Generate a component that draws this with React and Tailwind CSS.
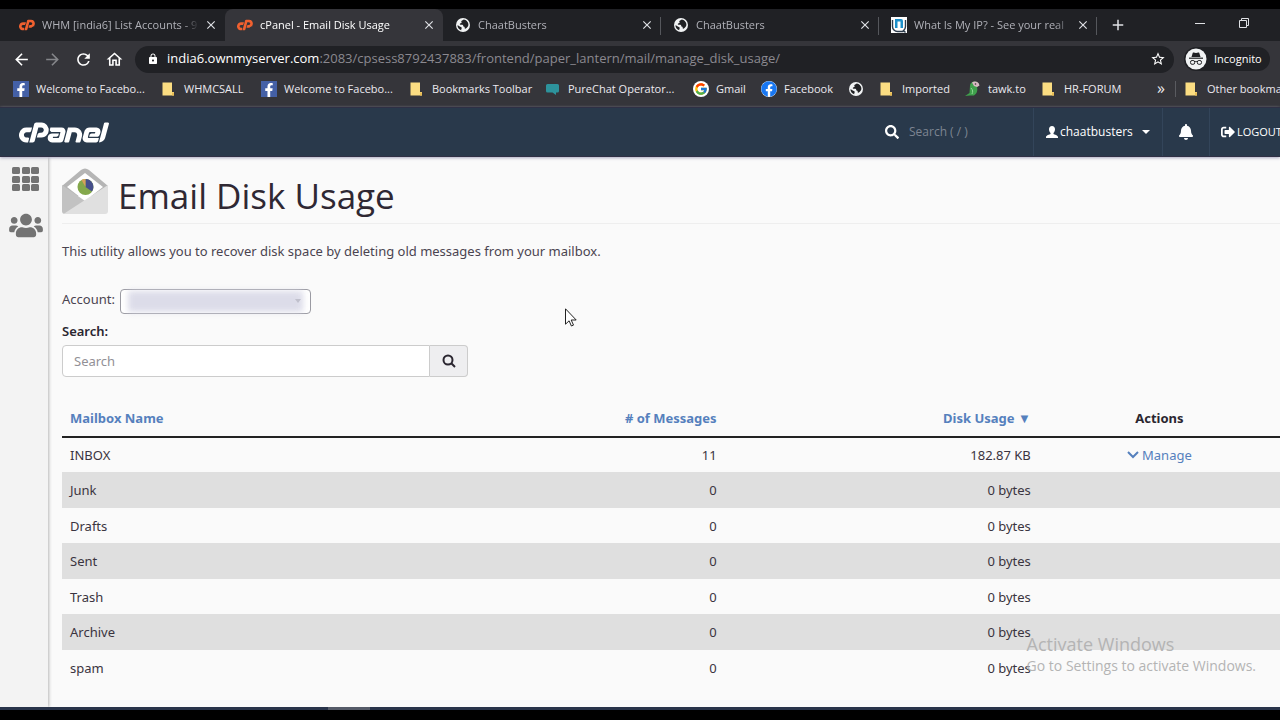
import { FaBell, FaSearch, FaSignOutAlt, FaUsers, FaFacebookF, FaFacebook } from 'react-icons/fa';
import { FcGoogle } from 'react-icons/fc';
import { MdArrowBack, MdArrowForward, MdRefresh, MdOutlineHome, MdLock, MdStarBorder, MdClose, MdAdd } from 'react-icons/md';
import { SiCpanel } from 'react-icons/si';

const GlobeIcon = () => (
  <svg viewBox="0 0 16 16" className="h-4 w-4 shrink-0">
    <circle cx="8" cy="8" r="7" fill="#f1f3f4" />
    <path d="M8.6 2.4c-.4 1-1.800.7-2.300 1.700-.3.7.5 1 .3 1.600-.3.7-1.600.4-1.800 1.200-.1.8 1 .9 1.900.9 1.100 0 1.500.5 1.600 1.300.1.7 1 .6 1.300 1.200.3.5 0 1.200.4 1.400.7.2 2.700-1.600 3.300-3.200.7-2.300-1.200-5.600-4.700-6.100z" fill="#202124" />
    <path d="M2.400 8.200c1 .2 1.700.7 2.300 1.300.7.6 1.900.4 2 1.400.1.9-.6 1.200-.5 2.300-2.100-.6-3.700-2.500-3.800-5z" fill="#202124" />
  </svg>
);

// only the first two letters of the wordmark
const CpIcon = () => (
  <SiCpanel
    viewBox="0 9 8 6"
    className="h-3 w-4 shrink-0 text-[#f0602f] [clip-path:polygon(0_0,100%_0,100%_60%,82%_66%,82%_100%,0_100%)]"
  />
);

const IpIcon = () => (
  <svg viewBox="0 0 16 16" className="h-4 w-4 shrink-0">
    <rect width="16" height="16" fill="#fff" />
    <path d="M1.500 3v6.500a5 5 0 0 0 5 5h6M14.500 3v6.500a5 5 0 0 1-2 4l2 2" fill="none" stroke="#2b3a4a" strokeWidth="1.400" />
    <path d="M4 11V2h6a2 2 0 0 1 2 2v7H9.500V4.500h-3V11z" fill="#1c8fc9" />
  </svg>
);

const FolderIcon = () => (
  <svg viewBox="0 0 16 16" className="h-4 w-4 shrink-0">
    <path d="M1.500 1.500h9.500v9.500h2v3.500H1.500z" fill="#fbdd82" />
    <path d="M11 11.500h2v3h-2z" fill="#e9bd55" />
  </svg>
);

const FbSquareIcon = () => (
  <span className="flex h-4 w-4 shrink-0 items-end justify-center bg-[#4460a6]">
    <FaFacebookF className="h-3.5 w-3.5 text-white" />
  </span>
);

const FbRoundIcon = () => (
  <span className="h-4 w-4 shrink-0 rounded-full bg-white">
    <FaFacebook className="h-4 w-4 text-[#1877f2]" />
  </span>
);

const ChatIcon = () => (
  <svg viewBox="0 0 16 16" className="h-4 w-4 shrink-0">
    <path d="M2.500 3h10A1.500 1.500 0 0 1 14 4.500V10a1.500 1.500 0 0 1-1.500 1.500H11V14l-3.500-2.500h-5A1.500 1.500 0 0 1 1 10V4.500A1.500 1.500 0 0 1 2.500 3z" fill="#2d939c" />
  </svg>
);

const GoogleIcon = () => (
  <span className="flex h-4 w-4 shrink-0 items-center justify-center rounded-full bg-white">
    <FcGoogle className="h-3.5 w-3.5" />
  </span>
);

const ParrotIcon = () => (
  <svg viewBox="0 0 16 16" className="h-4 w-4 shrink-0">
    <path d="M5 5c0-3 2-4.500 4.500-4.500S14 2 14 4.500L12 6c1 4-.5 7-3 8.500H5L0 15l4.500-3z" fill="#3fa04c" />
    <path d="M7 1.500c3-2 7-.5 7.500 3L12 6 9 5z" fill="#d9b8c4" />
    <path d="M6 7c2 2 2 4 1 6" fill="none" stroke="#8fd694" />
    <circle cx="10.500" cy="3" r=".8" fill="#333" />
  </svg>
);

const IncognitoIcon = () => (
  <svg viewBox="0 0 22 22" className="h-[22px] w-[22px] shrink-0">
    <circle cx="11" cy="11" r="10.500" fill="#f1f3f4" />
    <path d="M6.500 9l1.200-4c.2-.5.6-.6 1-.4 1.500.6 3.100.6 4.600 0 .4-.2.8-.1 1 .4l1.200 4z" fill="#202124" />
    <path d="M4 10.200h14" stroke="#202124" strokeWidth="1.200" />
    <rect x="5.500" y="12.500" width="4.200" height="3.800" rx="1.600" fill="none" stroke="#202124" />
    <rect x="12.300" y="12.500" width="4.200" height="3.800" rx="1.600" fill="none" stroke="#202124" />
    <path d="M9.700 13.800c.8-.5 1.800-.5 2.600 0" fill="none" stroke="#202124" />
  </svg>
);

const UserIcon = () => (
  <svg viewBox="0 0 12 12" className="h-3 w-3 shrink-0" fill="currentColor">
    <path d="M6 0c1.900 0 3 1.300 3 3.200 0 1.500-.6 2.900-1.500 3.700v1c1 .6 4.500 1.300 4.500 3V12H0v-1.100c0-1.700 3.500-2.400 4.500-3v-1C3.600 6.100 3 4.700 3 3.200 3 1.300 4.100 0 6 0z" />
  </svg>
);

const GridIcon = () => (
  <svg viewBox="0 0 28 24" className="h-6 w-7" fill="currentColor">
    {[0, 9, 17].map((y) =>
      [0, 10, 19].map((x) => <rect key={`${x}-${y}`} x={x} y={y} width="8" height="7" rx="1.500" />)
    )}
  </svg>
);

const MailUsageIcon = () => (
  <svg viewBox="0 0 46 46" className="h-[46px] w-[46px] shrink-0">
    <path d="M0 18 19 2q4-3 8 0l19 16v10H0z" fill="#b5b5b5" />
    <path d="M23 5 41 19 23 33 5 19z" fill="#fff" />
    <path d="M0 17l23 16v13H3a3 3 0 0 1-3-3z" fill="#c2c2c2" />
    <path d="M46 17v26a3 3 0 0 1-3 3H1.500z" fill="#e0e0e0" />
    <circle cx="23.500" cy="19" r="8" fill="#84a84c" />
    <path d="M23.500 19v-8a8 8 0 0 1 6.500 12.500z" fill="#47508c" />
    <path d="M23.500 19l-4-7a8 8 0 0 1 4-1z" fill="#d8a05c" />
  </svg>
);

const tabs = [
  { title: 'WHM [india6] List Accounts - 9', icon: CpIcon },
  { title: 'cPanel - Email Disk Usage', icon: CpIcon, active: true },
  { title: 'ChaatBusters', icon: GlobeIcon, divider: true },
  { title: 'ChaatBusters', icon: GlobeIcon, divider: true },
  { title: 'What Is My IP? - See your real', icon: IpIcon, divider: true },
];

const bookmarks = [
  { label: 'Welcome to Facebo...', icon: FbSquareIcon, width: 'w-[148px]' },
  { label: 'WHMCSALL', icon: FolderIcon, width: 'w-[100px]' },
  { label: 'Welcome to Facebo...', icon: FbSquareIcon, width: 'w-[148px]' },
  { label: 'Bookmarks Toolbar', icon: FolderIcon, width: 'w-[136px]' },
  { label: 'PureChat Operator...', icon: ChatIcon, width: 'w-[148px]' },
  { label: 'Gmail', icon: GoogleIcon, width: 'w-[68px]' },
  { label: 'Facebook', icon: FbRoundIcon, width: 'w-[87px]' },
  { label: '', icon: GlobeIcon, width: 'w-[31px]' },
  { label: 'Imported', icon: FolderIcon, width: 'w-[86px]' },
  { label: 'tawk.to', icon: ParrotIcon, width: 'w-[76px]' },
  { label: 'HR-FORUM', icon: FolderIcon, width: 'w-[84px]' },
];

const mailboxes = [
  { name: 'INBOX', messages: 11, usage: '182.87 KB', manage: true },
  { name: 'Junk', messages: 0, usage: '0 bytes' },
  { name: 'Drafts', messages: 0, usage: '0 bytes' },
  { name: 'Sent', messages: 0, usage: '0 bytes' },
  { name: 'Trash', messages: 0, usage: '0 bytes' },
  { name: 'Archive', messages: 0, usage: '0 bytes' },
  { name: 'spam', messages: 0, usage: '0 bytes' },
];

function TabStrip() {
  return (
    <div className="flex h-8 items-stretch bg-[#202125] pl-[7px] text-[11px]">
      {tabs.map(({ title, icon: Icon, active, divider }, i) => (
        <div
          key={i}
          className={`relative flex w-[218px] shrink-0 items-center pl-3 pr-1.5 ${
            active ? 'rounded-t-lg bg-[#35353a] text-white' : 'text-[#b0b1b8]'
          }`}
        >
          <Icon />
          <span className="ml-[7px] mr-1 flex-1 overflow-hidden whitespace-nowrap [mask-image:linear-gradient(to_right,#000_90%,transparent)]">
            {title}
          </span>
          <button aria-label="Close tab" className="flex h-4 w-4 shrink-0 items-center justify-center text-[#dfe1e5]">
            <MdClose className="h-3.5 w-3.5" />
          </button>
          {divider && <span className="absolute right-0 top-2 h-[18px] w-px bg-[#55575c]" />}
        </div>
      ))}
      <button aria-label="New tab" className="flex w-[42px] items-center justify-center text-[#dfe1e5]">
        <MdAdd className="h-[18px] w-[18px]" />
      </button>
      <div className="ml-auto flex shrink-0 items-center gap-[34px] pb-1 pr-[31px] text-[#dfe1e5]">
        <button aria-label="Minimize">
          <svg viewBox="0 0 10 10" className="h-2.5 w-2.5"><path d="M0 5.500h10" stroke="currentColor" /></svg>
        </button>
        <button aria-label="Restore">
          <svg viewBox="0 0 10 10" className="h-2.5 w-2.5" fill="none" stroke="currentColor">
            <path d="M.5 2.500h7v7h-7zM2.500 2.500v-2h7v7h-2" />
          </svg>
        </button>
      </div>
    </div>
  );
}

function Toolbar() {
  return (
    <div className="flex h-9 items-center bg-[#35353a] pl-3 pr-2.5 text-white">
      <div className="flex shrink-0 gap-3">
        <button aria-label="Back"><MdArrowBack className="h-[19px] w-[19px]" /></button>
        <button aria-label="Forward" className="text-[#85868a]"><MdArrowForward className="h-[19px] w-[19px]" /></button>
        <button aria-label="Reload"><MdRefresh className="h-[19px] w-[19px]" /></button>
        <button aria-label="Home"><MdOutlineHome className="h-[19px] w-[19px]" /></button>
      </div>
      <div className="ml-[11px] flex h-[27px] min-w-0 flex-1 items-center rounded-full bg-[#202125] pl-3 pr-2">
        <MdLock className="h-3 w-3 shrink-0" />
        <p className="ml-2 flex-1 truncate text-[13px] text-[#8b8990]">
          <span className="text-white">india6.ownmyserver.com</span>
          :2083/cpsess8792437883/frontend/paper_lantern/mail/manage_disk_usage/
        </p>
        <button aria-label="Bookmark this page"><MdStarBorder className="h-4 w-4" /></button>
      </div>
      <div className="ml-2.5 flex h-6 w-[86px] shrink-0 items-center gap-[7px] rounded-full bg-[#202125] pl-px text-[11px]">
        <IncognitoIcon />
        <span>Incognito</span>
      </div>
    </div>
  );
}

function BookmarksBar() {
  return (
    <div className="flex h-[30px] items-center overflow-hidden whitespace-nowrap bg-[#35353a] pb-1.5 pl-[13px] text-[11px] text-[#eceaf0]">
      {bookmarks.map(({ label, icon: Icon, width }, i) => (
        <a key={i} href="#" aria-label={label || 'ChaatBusters'} className={`flex shrink-0 items-center gap-[7px] ${width}`}>
          <Icon />
          {label && <span>{label}</span>}
        </a>
      ))}
      <button aria-label="More bookmarks" className="ml-auto pb-0.5 text-base leading-4">»</button>
      <span className="ml-2.5 h-4 w-px shrink-0 bg-[#5a5b60]" />
      <a href="#" className="ml-2 flex w-24 shrink-0 items-center gap-[7px]">
        <FolderIcon />
        <span>Other bookmarks</span>
      </a>
    </div>
  );
}

function CpanelHeader() {
  return (
    <header className="relative z-10 flex h-[50px] items-stretch overflow-hidden border-y border-[#2f3045] bg-[#29394b] text-white shadow-[0_1px_3px_#a9a9c0]">
      <a href="#" aria-label="cPanel" className="ml-[19px] flex items-center">
        <SiCpanel viewBox="0 9 24 6" className="h-[23px] w-[90px]" />
      </a>
      <label className="ml-auto flex w-[148px] shrink-0 items-center gap-2.5">
        <FaSearch className="h-3.5 w-3.5" />
        <input aria-label="Search" placeholder="Search ( / )" className="w-24 bg-transparent outline-none placeholder:text-[#7d8592]" />
      </label>
      <button className="flex w-[129px] shrink-0 items-center border-l border-[#33455a] pl-3">
        <UserIcon />
        <span className="ml-0.5">chaatbusters</span>
        <span className="ml-auto mr-3 border-x-4 border-t-4 border-x-transparent border-t-white" />
      </button>
      <button aria-label="Notifications" className="flex w-[47px] shrink-0 items-center justify-center border-l border-[#33455a]">
        <FaBell className="h-4 w-4" />
      </button>
      <a href="#" className="flex w-[71px] shrink-0 items-center gap-0.5 border-l border-[#33455a] pl-[11px] text-[11px]">
        <FaSignOutAlt className="h-3.5 w-3.5 shrink-0" />
        LOGOUT
      </a>
    </header>
  );
}

function MailboxTable() {
  return (
    <table className="mt-[23px] w-full table-fixed text-[#3a3440]">
      <colgroup>
        <col className="w-[28%]" />
        <col className="w-[26.4%]" />
        <col className="w-[25.8%]" />
        <col />
      </colgroup>
      <thead>
        <tr className="h-[37px] border-b-2 border-[#222] font-bold text-[#5580bd]">
          <th className="px-2 text-left"><a href="#">Mailbox Name</a></th>
          <th className="px-2 text-right"><a href="#"># of Messages</a></th>
          <th className="px-2 text-right"><a href="#">Disk Usage ▼</a></th>
          <th className="px-2 text-center text-[#2a2630]">Actions</th>
        </tr>
      </thead>
      <tbody>
        {mailboxes.map((box) => (
          <tr key={box.name} className="h-[35px] even:h-9 even:bg-[#dfdfdf]">
            <td className="px-2">{box.name}</td>
            <td className="px-2 text-right">{box.messages}</td>
            <td className="px-2 text-right">{box.usage}</td>
            <td className="px-2">
              {box.manage && (
                <a href="#" className="flex items-center justify-center gap-[3px] text-[#5580bd]">
                  <svg viewBox="0 0 12 8" className="h-2 w-3" fill="none" stroke="currentColor" strokeWidth="2">
                    <path d="M1 1l5 5 5-5" />
                  </svg>
                  Manage
                </a>
              )}
            </td>
          </tr>
        ))}
      </tbody>
    </table>
  );
}

export default function App() {
  return (
    <div className="relative flex min-h-screen flex-col overflow-hidden bg-black pt-[9px] font-['Open_Sans','Noto_Sans',sans-serif] text-xs">
      <TabStrip />
      <Toolbar />
      <BookmarksBar />
      <CpanelHeader />

      <div className="flex flex-1 bg-[#fafafa]">
        <nav className="flex w-12 shrink-0 flex-col items-center gap-[21px] bg-[#f3f3f3] pl-1 pt-2.5 text-[#737373] shadow-[1px_0_3px_#b5b5b5]">
          <a href="#" aria-label="Home"><GridIcon /></a>
          <a href="#" aria-label="User Manager"><FaUsers className="h-[27px] w-[34px]" /></a>
        </nav>

        <main className="min-w-0 flex-1 pl-[14px] font-['Noto_Sans',sans-serif] text-[13px] leading-5 text-[#4a4450]">
          <div className="flex items-end gap-2.5 border-b border-[#eee] pb-[9px] pt-[11px]">
            <MailUsageIcon />
            <h1 className="font-['Open_Sans',sans-serif] text-[35px] leading-9 text-[#2f2833]">Email Disk Usage</h1>
          </div>
          <p className="mt-[17px]">This utility allows you to recover disk space by deleting old messages from your mailbox.</p>

          <div className="mt-7 flex items-start gap-[5px]">
            <label htmlFor="account">Account:</label>
            <div className="relative">
              <select id="account" className="block h-[25px] w-[191px] appearance-none rounded border border-[#9a9aa2] bg-white">
                <option></option>
              </select>
              <span className="pointer-events-none absolute inset-x-2 inset-y-0.5 bg-[#dcdce9] blur-[3px]" />
              <span className="pointer-events-none absolute right-2.5 top-2.5 border-x-[3px] border-t-4 border-x-transparent border-t-[#c0c0cc]" />
            </div>
          </div>

          <label htmlFor="search" className="mt-[7px] block font-semibold text-[#2a2630]">Search:</label>
          <div className="mt-1 flex h-8 w-[406px]">
            <input
              id="search"
              placeholder="Search"
              className="min-w-0 flex-1 rounded-l-sm border border-[#ccc] bg-white px-[11px] outline-none placeholder:text-[#929096]"
            />
            <button aria-label="Search" className="flex w-[38px] items-center justify-center rounded-r-sm border border-l-0 border-[#ccc] bg-[#eeeef0] text-[#2a2630]">
              <svg viewBox="0 0 14 14" className="h-3.5 w-3.5" fill="none" stroke="currentColor" strokeWidth="2">
                <circle cx="6" cy="6" r="4.500" />
                <path d="M9.300 9.300l3.700 3.700" />
              </svg>
            </button>
          </div>

          <MailboxTable />
        </main>
      </div>

      <footer className="bg-black pb-2.5">
        <div className="h-[3px] bg-[#29344a] pl-[328px]">
          <div className="h-full w-[42px] bg-[#555b68]" />
        </div>
      </footer>

      <div className="pointer-events-none absolute bottom-11 right-6 text-[#b4b4b4]">
        <p className="text-lg leading-6">Activate Windows</p>
        <p className="text-sm leading-5">Go to Settings to activate Windows.</p>
      </div>

      <svg viewBox="0 0 12 19" className="pointer-events-none absolute left-[565px] top-[308px] h-[19px] w-3">
        <path d="M.5.8v15.400l3.600-3.400 2.300 5.200 2.100-.9-2.300-5.100h5z" fill="#fff" stroke="#222" />
      </svg>
    </div>
  );
}
